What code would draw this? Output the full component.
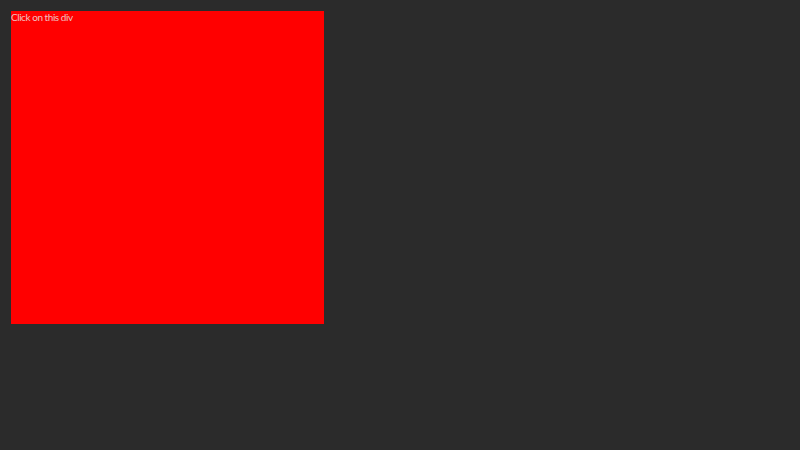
export default function App() {
  return (
    <div className="w-[800px] h-[450px] bg-[#2b2b2b] p-[11px]" style={{ fontFamily: 'Lato, "Open Sans", sans-serif' }}>
      <div className="w-[313px] h-[313px] bg-[#ff0000] text-[#f0c0c0] text-[10px] leading-[13px] tracking-[-0.45px]">
        Click on this div
      </div>
    </div>
  );
}
